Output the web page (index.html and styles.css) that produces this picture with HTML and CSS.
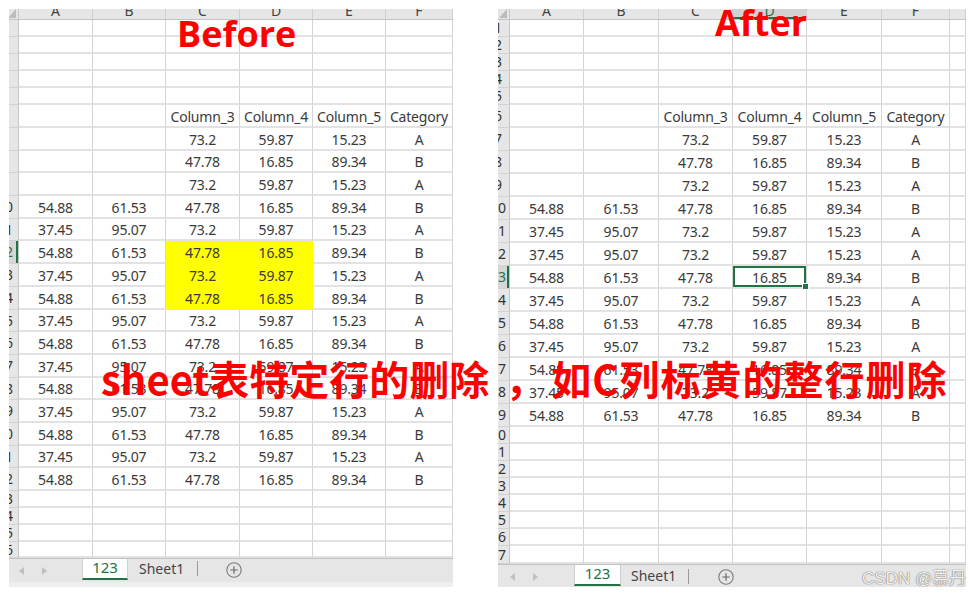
FILE: index.html
```html
<!DOCTYPE html>
<html lang="zh">
<head>
<meta charset="utf-8">
<title>sheet表特定行的删除</title>
<link rel="stylesheet" href="styles.css">
</head>
<body>
<div class="page">
  <section class="sheet before">
    <div class="row hdr"><div class="corner"></div><div class="ch">A</div><div class="ch">B</div><div class="ch">C</div><div class="ch">D</div><div class="ch">E</div><div class="ch">F</div></div>
    <div class="row h17"><div class="rh"><span>1</span></div><div class="c"></div><div class="c"></div><div class="c"></div><div class="c"></div><div class="c"></div><div class="c"></div></div>
    <div class="row h17"><div class="rh"><span>2</span></div><div class="c"></div><div class="c"></div><div class="c"></div><div class="c"></div><div class="c"></div><div class="c"></div></div>
    <div class="row h17"><div class="rh"><span>3</span></div><div class="c"></div><div class="c"></div><div class="c"></div><div class="c"></div><div class="c"></div><div class="c"></div></div>
    <div class="row h17"><div class="rh"><span>4</span></div><div class="c"></div><div class="c"></div><div class="c"></div><div class="c"></div><div class="c"></div><div class="c"></div></div>
    <div class="row h17"><div class="rh"><span>5</span></div><div class="c"></div><div class="c"></div><div class="c"></div><div class="c"></div><div class="c"></div><div class="c"></div></div>
    <div class="row h23"><div class="rh"><span>6</span></div><div class="c"></div><div class="c"></div><div class="c">Column_3</div><div class="c">Column_4</div><div class="c">Column_5</div><div class="c">Category</div></div>
    <div class="row h23"><div class="rh"><span>7</span></div><div class="c"></div><div class="c"></div><div class="c">73.2</div><div class="c">59.87</div><div class="c">15.23</div><div class="c">A</div></div>
    <div class="row h22"><div class="rh"><span>8</span></div><div class="c"></div><div class="c"></div><div class="c">47.78</div><div class="c">16.85</div><div class="c">89.34</div><div class="c">B</div></div>
    <div class="row h23"><div class="rh"><span>9</span></div><div class="c"></div><div class="c"></div><div class="c">73.2</div><div class="c">59.87</div><div class="c">15.23</div><div class="c">A</div></div>
    <div class="row h23"><div class="rh"><span>10</span></div><div class="c">54.88</div><div class="c">61.53</div><div class="c">47.78</div><div class="c">16.85</div><div class="c">89.34</div><div class="c">B</div></div>
    <div class="row h22"><div class="rh"><span>11</span></div><div class="c">37.45</div><div class="c">95.07</div><div class="c">73.2</div><div class="c">59.87</div><div class="c">15.23</div><div class="c">A</div></div>
    <div class="row h23"><div class="rh active"><span>12</span></div><div class="c">54.88</div><div class="c">61.53</div><div class="c yellow">47.78</div><div class="c yellow">16.85</div><div class="c">89.34</div><div class="c">B</div></div>
    <div class="row h23"><div class="rh"><span>13</span></div><div class="c">37.45</div><div class="c">95.07</div><div class="c yellow">73.2</div><div class="c yellow">59.87</div><div class="c">15.23</div><div class="c">A</div></div>
    <div class="row h23"><div class="rh"><span>14</span></div><div class="c">54.88</div><div class="c">61.53</div><div class="c yellow">47.78</div><div class="c yellow">16.85</div><div class="c">89.34</div><div class="c">B</div></div>
    <div class="row h22"><div class="rh"><span>15</span></div><div class="c">37.45</div><div class="c">95.07</div><div class="c">73.2</div><div class="c">59.87</div><div class="c">15.23</div><div class="c">A</div></div>
    <div class="row h23"><div class="rh"><span>16</span></div><div class="c">54.88</div><div class="c">61.53</div><div class="c">47.78</div><div class="c">16.85</div><div class="c">89.34</div><div class="c">B</div></div>
    <div class="row h23"><div class="rh"><span>17</span></div><div class="c">37.45</div><div class="c">95.07</div><div class="c">73.2</div><div class="c">59.87</div><div class="c">15.23</div><div class="c">A</div></div>
    <div class="row h22"><div class="rh"><span>18</span></div><div class="c">54.88</div><div class="c">61.53</div><div class="c">47.78</div><div class="c">16.85</div><div class="c">89.34</div><div class="c">B</div></div>
    <div class="row h23"><div class="rh"><span>19</span></div><div class="c">37.45</div><div class="c">95.07</div><div class="c">73.2</div><div class="c">59.87</div><div class="c">15.23</div><div class="c">A</div></div>
    <div class="row h23"><div class="rh"><span>20</span></div><div class="c">54.88</div><div class="c">61.53</div><div class="c">47.78</div><div class="c">16.85</div><div class="c">89.34</div><div class="c">B</div></div>
    <div class="row h22"><div class="rh"><span>21</span></div><div class="c">37.45</div><div class="c">95.07</div><div class="c">73.2</div><div class="c">59.87</div><div class="c">15.23</div><div class="c">A</div></div>
    <div class="row h23"><div class="rh"><span>22</span></div><div class="c">54.88</div><div class="c">61.53</div><div class="c">47.78</div><div class="c">16.85</div><div class="c">89.34</div><div class="c">B</div></div>
    <div class="row h17"><div class="rh"><span>23</span></div><div class="c"></div><div class="c"></div><div class="c"></div><div class="c"></div><div class="c"></div><div class="c"></div></div>
    <div class="row h17"><div class="rh"><span>24</span></div><div class="c"></div><div class="c"></div><div class="c"></div><div class="c"></div><div class="c"></div><div class="c"></div></div>
    <div class="row h17"><div class="rh"><span>25</span></div><div class="c"></div><div class="c"></div><div class="c"></div><div class="c"></div><div class="c"></div><div class="c"></div></div>
    <div class="row h16"><div class="rh"><span>26</span></div><div class="c"></div><div class="c"></div><div class="c"></div><div class="c"></div><div class="c"></div><div class="c"></div></div>
    <div class="tabs">
      <div class="nav"><span class="arr left"></span><span class="arr right"></span></div>
      <div class="tab active">123</div>
      <div class="tab">Sheet1</div>
      <div class="sep"></div>
      <div class="add"><svg width="16" height="16" viewBox="0 0 16 16"><circle cx="8" cy="8" r="7.2" fill="none" stroke="#7a7a7a" stroke-width="1.1"/><path d="M8 4.2v7.6M4.2 8h7.6" stroke="#6a6a6a" stroke-width="1.2"/></svg></div>
    </div>
    <div class="strip"></div>
  </section>

  <section class="sheet after">
    <div class="row hdr"><div class="corner"></div><div class="ch">A</div><div class="ch">B</div><div class="ch">C</div><div class="ch hl">D</div><div class="ch">E</div><div class="ch">F</div><div class="ch"></div></div>
    <div class="row h17"><div class="rh"><span>1</span></div><div class="c"></div><div class="c"></div><div class="c"></div><div class="c"></div><div class="c"></div><div class="c"></div><div class="c"></div></div>
    <div class="row h17"><div class="rh"><span>2</span></div><div class="c"></div><div class="c"></div><div class="c"></div><div class="c"></div><div class="c"></div><div class="c"></div><div class="c"></div></div>
    <div class="row h17"><div class="rh"><span>3</span></div><div class="c"></div><div class="c"></div><div class="c"></div><div class="c"></div><div class="c"></div><div class="c"></div><div class="c"></div></div>
    <div class="row h17"><div class="rh"><span>4</span></div><div class="c"></div><div class="c"></div><div class="c"></div><div class="c"></div><div class="c"></div><div class="c"></div><div class="c"></div></div>
    <div class="row h17"><div class="rh"><span>5</span></div><div class="c"></div><div class="c"></div><div class="c"></div><div class="c"></div><div class="c"></div><div class="c"></div><div class="c"></div></div>
    <div class="row h23"><div class="rh"><span>6</span></div><div class="c"></div><div class="c"></div><div class="c">Column_3</div><div class="c">Column_4</div><div class="c">Column_5</div><div class="c">Category</div><div class="c"></div></div>
    <div class="row h23"><div class="rh"><span>7</span></div><div class="c"></div><div class="c"></div><div class="c">73.2</div><div class="c">59.87</div><div class="c">15.23</div><div class="c">A</div><div class="c"></div></div>
    <div class="row h23"><div class="rh"><span>8</span></div><div class="c"></div><div class="c"></div><div class="c">47.78</div><div class="c">16.85</div><div class="c">89.34</div><div class="c">B</div><div class="c"></div></div>
    <div class="row h23"><div class="rh"><span>9</span></div><div class="c"></div><div class="c"></div><div class="c">73.2</div><div class="c">59.87</div><div class="c">15.23</div><div class="c">A</div><div class="c"></div></div>
    <div class="row h23"><div class="rh"><span>10</span></div><div class="c">54.88</div><div class="c">61.53</div><div class="c">47.78</div><div class="c">16.85</div><div class="c">89.34</div><div class="c">B</div><div class="c"></div></div>
    <div class="row h23"><div class="rh"><span>11</span></div><div class="c">37.45</div><div class="c">95.07</div><div class="c">73.2</div><div class="c">59.87</div><div class="c">15.23</div><div class="c">A</div><div class="c"></div></div>
    <div class="row h23"><div class="rh"><span>12</span></div><div class="c">37.45</div><div class="c">95.07</div><div class="c">73.2</div><div class="c">59.87</div><div class="c">15.23</div><div class="c">A</div><div class="c"></div></div>
    <div class="row h23"><div class="rh active"><span>13</span></div><div class="c">54.88</div><div class="c">61.53</div><div class="c">47.78</div><div class="c sel">16.85</div><div class="c">89.34</div><div class="c">B</div><div class="c"></div></div>
    <div class="row h23"><div class="rh"><span>14</span></div><div class="c">37.45</div><div class="c">95.07</div><div class="c">73.2</div><div class="c">59.87</div><div class="c">15.23</div><div class="c">A</div><div class="c"></div></div>
    <div class="row h23"><div class="rh"><span>15</span></div><div class="c">54.88</div><div class="c">61.53</div><div class="c">47.78</div><div class="c">16.85</div><div class="c">89.34</div><div class="c">B</div><div class="c"></div></div>
    <div class="row h23"><div class="rh"><span>16</span></div><div class="c">37.45</div><div class="c">95.07</div><div class="c">73.2</div><div class="c">59.87</div><div class="c">15.23</div><div class="c">A</div><div class="c"></div></div>
    <div class="row h23"><div class="rh"><span>17</span></div><div class="c">54.88</div><div class="c">61.53</div><div class="c">47.78</div><div class="c">16.85</div><div class="c">89.34</div><div class="c">B</div><div class="c"></div></div>
    <div class="row h23"><div class="rh"><span>18</span></div><div class="c">37.45</div><div class="c">95.07</div><div class="c">73.2</div><div class="c">59.87</div><div class="c">15.23</div><div class="c">A</div><div class="c"></div></div>
    <div class="row h23"><div class="rh"><span>19</span></div><div class="c">54.88</div><div class="c">61.53</div><div class="c">47.78</div><div class="c">16.85</div><div class="c">89.34</div><div class="c">B</div><div class="c"></div></div>
    <div class="row h17"><div class="rh"><span>20</span></div><div class="c"></div><div class="c"></div><div class="c"></div><div class="c"></div><div class="c"></div><div class="c"></div><div class="c"></div></div>
    <div class="row h17"><div class="rh"><span>21</span></div><div class="c"></div><div class="c"></div><div class="c"></div><div class="c"></div><div class="c"></div><div class="c"></div><div class="c"></div></div>
    <div class="row h17"><div class="rh"><span>22</span></div><div class="c"></div><div class="c"></div><div class="c"></div><div class="c"></div><div class="c"></div><div class="c"></div><div class="c"></div></div>
    <div class="row h17"><div class="rh"><span>23</span></div><div class="c"></div><div class="c"></div><div class="c"></div><div class="c"></div><div class="c"></div><div class="c"></div><div class="c"></div></div>
    <div class="row h17"><div class="rh"><span>24</span></div><div class="c"></div><div class="c"></div><div class="c"></div><div class="c"></div><div class="c"></div><div class="c"></div><div class="c"></div></div>
    <div class="row h17"><div class="rh"><span>25</span></div><div class="c"></div><div class="c"></div><div class="c"></div><div class="c"></div><div class="c"></div><div class="c"></div><div class="c"></div></div>
    <div class="row h17"><div class="rh"><span>26</span></div><div class="c"></div><div class="c"></div><div class="c"></div><div class="c"></div><div class="c"></div><div class="c"></div><div class="c"></div></div>
    <div class="row h18"><div class="rh"><span>27</span></div><div class="c"></div><div class="c"></div><div class="c"></div><div class="c"></div><div class="c"></div><div class="c"></div><div class="c"></div></div>
    <div class="tabs">
      <div class="nav"><span class="arr left"></span><span class="arr right"></span></div>
      <div class="tab active">123</div>
      <div class="tab">Sheet1</div>
      <div class="sep"></div>
      <div class="add"><svg width="16" height="16" viewBox="0 0 16 16"><circle cx="8" cy="8" r="7.2" fill="none" stroke="#7a7a7a" stroke-width="1.1"/><path d="M8 4.2v7.6M4.2 8h7.6" stroke="#6a6a6a" stroke-width="1.2"/></svg></div>
    </div>
  </section>

  <div class="title t-before">Before</div>
  <div class="title t-after">After</div>
  <div class="caption"><span class="cap1">sheet表特定行的删除</span><span class="comma">，</span><span class="cap2">如C列标黄的整行删除</span></div>
  <div class="watermark">CSDN @慕丹</div>
</div>
</body>
</html>
```

FILE: styles.css
```css
html, body {
  margin: 0;
  padding: 0;
  background: #ffffff;
}

body {
  font-family: "Noto Sans", "Open Sans", sans-serif;
  color: #3a3a3a;
}

.page {
  position: relative;
  width: 974px;
  height: 599px;
  box-sizing: border-box;
  padding: 9px 0 0 9px;
  display: flex;
  align-items: flex-start;
  gap: 45px;
  overflow: hidden;
}

.sheet {
  display: flex;
  flex-direction: column;
  flex-shrink: 0;
}

.sheet.before {
  width: 444px;
  --cols: 10px 74px 73px 74px 73px 73px 67px;
  --rn-shift: -19px;
}

.sheet.after {
  width: 468px;
  --cols: 12px 74px 75px 74px 74px 75px 68px 16px;
  --rn-shift: -15px;
}

.row {
  display: grid;
  grid-template-columns: var(--cols);
  box-sizing: border-box;
}

.h16 { height: 16px; }
.h17 { height: 17px; }
.h18 { height: 18px; }
.h22 { height: 22px; }
.h23 { height: 23px; }

.hdr {
  height: 11px;
  background: #e6e6e6;
  border-bottom: 1px solid #c4c4c4;
}

.corner {
  position: relative;
  border-right: 1px solid #c8c8c8;
  overflow: hidden;
}

.corner::after {
  content: "";
  position: absolute;
  right: 2px;
  bottom: 1px;
  width: 8px;
  height: 9px;
  background: #bcbcbc;
  clip-path: polygon(100% 0, 100% 100%, 0 100%);
}

.ch {
  box-sizing: border-box;
  border-right: 1px solid #cfcfcf;
  display: flex;
  justify-content: center;
  align-items: flex-end;
  overflow: hidden;
  font-size: 14px;
  line-height: 14px;
  color: #444444;
  padding-bottom: 1px;
}

.ch.hl {
  background: #d2d2d2;
  color: #217346;
  box-shadow: inset 0 -2px 0 #217346;
}

.rh {
  box-sizing: border-box;
  background: #e6e6e6;
  border-right: 1px solid #c6c6c6;
  border-bottom: 1px solid #d2d2d2;
  display: flex;
  align-items: center;
  overflow: hidden;
  font-size: 14px;
  color: #333333;
}

.rh span {
  flex-shrink: 0;
  width: 30px;
  margin-left: var(--rn-shift);
  text-align: center;
  line-height: 1;
}

.rh.active {
  background: #d6d6d6;
  color: #217346;
  box-shadow: inset -2px 0 0 #217346;
}

.c {
  box-sizing: border-box;
  border-right: 1px solid #d4d4d4;
  border-bottom: 2px solid #e2e2e2;
  display: flex;
  align-items: center;
  justify-content: center;
  font-size: 14px;
  letter-spacing: -0.2px;
  color: #3a3a3a;
  white-space: nowrap;
  overflow: hidden;
  padding-top: 1px;
}

.c.yellow {
  background: #ffff00;
  border-right-color: #ffff00;
  border-bottom-color: #ffff00;
}

.c.sel {
  position: relative;
  overflow: visible;
  box-shadow: inset 0 0 0 2px #217346;
}

.c.sel::after {
  content: "";
  position: absolute;
  right: -3px;
  bottom: -3px;
  width: 5px;
  height: 5px;
  background: #217346;
  border: 1px solid #ffffff;
}

/* sheet tabs */
.tabs {
  box-sizing: border-box;
  height: 24px;
  background: #e6e6e6;
  border-top: 1px solid #c2c2c2;
  display: flex;
  align-items: stretch;
}

.after .tabs {
  height: 23px;
}

.nav {
  width: 73px;
  display: flex;
  align-items: center;
  gap: 18px;
  padding-left: 10px;
  box-sizing: border-box;
}

.after .nav {
  width: 76px;
  padding-left: 12px;
  padding-top: 2px;
}

.arr {
  width: 0;
  height: 0;
  border-top: 4px solid transparent;
  border-bottom: 4px solid transparent;
}

.arr.left { border-right: 5px solid #c0c0c0; }
.arr.right { border-left: 5px solid #c0c0c0; }

.tab {
  display: flex;
  align-items: center;
  font-size: 14px;
  color: #444444;
  padding: 0 13px 4px 11px;
}

.tab.active {
  box-sizing: border-box;
  width: 46px;
  padding: 0 0 4px;
  justify-content: center;
  background: #ffffff;
  color: #217346;
  border-left: 1px solid #cfcfcf;
  border-right: 1px solid #cfcfcf;
  border-bottom: 2px solid #217346;
  margin-bottom: 2px;
  font-size: 15px;
}

.after .tab {
  padding: 0 12px 2px 10px;
}

.after .tab.active {
  width: 47px;
  padding: 0 0 3px;
  margin-bottom: 1px;
}

.sep {
  width: 1px;
  height: 15px;
  align-self: center;
  margin-top: -4px;
  background: #9a9a9a;
}

.after .sep {
  margin-top: 0;
}

.add {
  display: flex;
  align-items: center;
  margin-left: 28px;
  padding-bottom: 2px;
}

.after .add {
  margin-left: 29px;
  padding-bottom: 0;
  padding-top: 2px;
}

.strip {
  height: 5px;
  background: #eeeeee;
}

/* overlays */
.title {
  position: absolute;
  font-family: "Open Sans", "Noto Sans", sans-serif;
  font-weight: 700;
  font-size: 36px;
  line-height: 1;
  color: #ff0000;
}

.t-before {
  left: 177px;
  top: 16px;
}

.t-after {
  left: 715px;
  top: 5px;
}

.caption {
  position: absolute;
  left: 101px;
  top: 358px;
  font-family: "Noto Sans CJK SC", "Noto Sans", sans-serif;
  font-weight: 700;
  font-size: 40px;
  line-height: 1;
  color: #ff0000;
  white-space: nowrap;
  display: flex;
}

.comma {
  margin-left: 16px;
  margin-right: 6px;
}

.cap2 {
  letter-spacing: 1px;
}

.watermark {
  position: absolute;
  left: 862px;
  top: 570px;
  font-family: "Liberation Sans", "Noto Sans CJK SC", sans-serif;
  font-size: 17px;
  line-height: 1;
  color: rgba(255, 255, 255, 0.92);
  text-shadow: 0 0 1px #6f6f6f, 0 0 1px #6f6f6f;
}
```
